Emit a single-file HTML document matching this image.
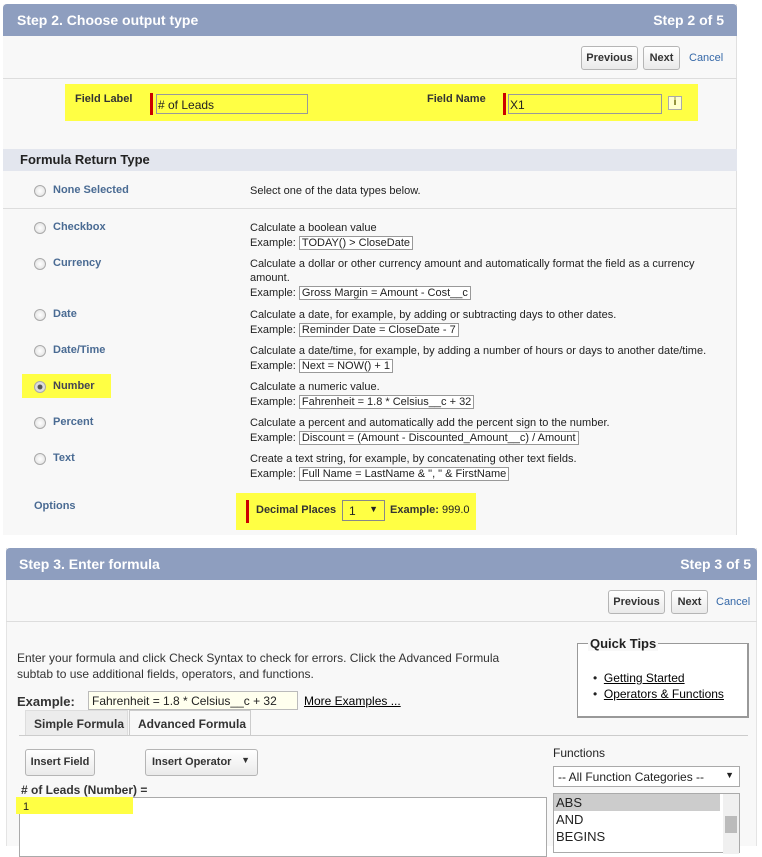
<!DOCTYPE html>
<html><head><style>
*{margin:0;padding:0;box-sizing:border-box}
body{width:762px;height:846px;background:#fff;position:relative;font-family:"Liberation Sans",Arial,sans-serif;font-size:11px;color:#222;overflow:hidden}
.a{position:absolute}
.hdr{background:#8e9ebf;color:#fff;font-weight:bold;font-size:14px}
.btn{position:absolute;border:1px solid #b5b5b5;border-radius:3px;background:linear-gradient(#fff,#eaeaea);font-weight:bold;color:#333;font-size:11px;text-align:center;line-height:22px}
.lbl{color:#4a6b93;font-weight:bold;font-size:11px}
.rad{position:absolute;width:12px;height:12px;border-radius:50%;border:1px solid #aaa;background:radial-gradient(#fff,#ddd)}
.ex{border:1px solid #999;padding:0 2px;background:#fff}
.d{position:absolute;left:250px;line-height:14px;font-size:11px}
a{color:#000;text-decoration:underline}
</style></head><body>
<!-- panel 1 -->
<div class="a" style="left:3px;top:4px;width:734px;height:531px;background:#f8f8f8;border-right:1px solid #e0e0e0"></div>
<div class="a hdr" style="left:3px;top:4px;width:734px;height:32px;border-radius:4px 4px 0 0"><span class="a" style="left:14px;top:8px">Step 2. Choose output type</span><span class="a" style="right:13px;top:8px">Step 2 of 5</span></div>
<div class="btn" style="left:581px;top:46px;width:57px;height:24px">Previous</div>
<div class="btn" style="left:643px;top:46px;width:37px;height:24px">Next</div>
<div class="a" style="left:689px;top:52px;color:#3568a8">Cancel</div>
<div class="a" style="left:3px;top:78px;width:734px;height:1px;background:#ddd"></div>
<div class="a" style="left:65px;top:84px;width:633px;height:37px;background:#ffff44"></div>
<div class="a" style="left:75px;top:93px;font-weight:bold;color:#333">Field Label</div>
<div class="a" style="left:150px;top:93px;width:3px;height:22px;background:#c00"></div>
<div class="a" style="left:156px;top:94px;width:152px;height:20px;border:1px solid #999;background:#ffff44;font-size:12px;padding:3px 1px">#&nbsp;of Leads</div>
<div class="a" style="left:427px;top:93px;font-weight:bold;color:#333">Field Name</div>
<div class="a" style="left:503px;top:93px;width:3px;height:22px;background:#c00"></div>
<div class="a" style="left:508px;top:94px;width:154px;height:20px;border:1px solid #999;background:#ffff44;font-size:12px;padding:3px 1px">X1</div>
<div class="a" style="left:668px;top:96px;width:14px;height:14px;border:1px solid #aaa;background:#ffc;font-size:10px;text-align:center;line-height:12px;color:#660;font-weight:bold">i</div>
<div class="a" style="left:3px;top:149px;width:734px;height:22px;background:#e3e6ee"></div>
<div class="a" style="left:20px;top:152px;font-size:13px;font-weight:bold;color:#222">Formula Return Type</div>
<div class="rad" style="left:34px;top:185px"></div><div class="a lbl" style="left:53px;top:184px">None Selected</div>
<div class="d" style="top:184px">Select one of the data types below.</div>
<div class="a" style="left:3px;top:208px;width:734px;height:1px;background:#ddd"></div>

<div class="rad" style="left:34px;top:222px"></div><div class="a lbl" style="left:53px;top:221px">Checkbox</div>
<div class="d" style="top:221px">Calculate a boolean value<br><span style="line-height:16px">Example: <span class="ex">TODAY() &gt; CloseDate</span></span></div>
<div class="rad" style="left:34px;top:258px"></div><div class="a lbl" style="left:53px;top:257px">Currency</div>
<div class="d" style="top:257px;width:460px">Calculate a dollar or other currency amount and automatically format the field as a currency amount.<br><span style="line-height:16px">Example: <span class="ex">Gross Margin = Amount - Cost__c</span></span></div>
<div class="rad" style="left:34px;top:309px"></div><div class="a lbl" style="left:53px;top:308px">Date</div>
<div class="d" style="top:308px">Calculate a date, for example, by adding or subtracting days to other dates.<br><span style="line-height:16px">Example: <span class="ex">Reminder Date = CloseDate - 7</span></span></div>
<div class="rad" style="left:34px;top:345px"></div><div class="a lbl" style="left:53px;top:344px">Date/Time</div>
<div class="d" style="top:344px">Calculate a date/time, for example, by adding a number of hours or days to another date/time.<br><span style="line-height:16px">Example: <span class="ex">Next = NOW() + 1</span></span></div>
<div class="a" style="left:22px;top:374px;width:89px;height:24px;background:#ffff44"></div>
<div class="rad" style="left:34px;top:381px;background:radial-gradient(#555 30%,#ddd 40%)"></div><div class="a lbl" style="left:53px;top:380px;color:#445">Number</div>
<div class="d" style="top:380px">Calculate a numeric value.<br><span style="line-height:16px">Example: <span class="ex">Fahrenheit = 1.8 * Celsius__c + 32</span></span></div>
<div class="rad" style="left:34px;top:417px"></div><div class="a lbl" style="left:53px;top:416px">Percent</div>
<div class="d" style="top:416px">Calculate a percent and automatically add the percent sign to the number.<br><span style="line-height:16px">Example: <span class="ex">Discount = (Amount - Discounted_Amount__c) / Amount</span></span></div>
<div class="rad" style="left:34px;top:453px"></div><div class="a lbl" style="left:53px;top:452px">Text</div>
<div class="d" style="top:452px">Create a text string, for example, by concatenating other text fields.<br><span style="line-height:16px">Example: <span class="ex">Full Name = LastName &amp; ", " &amp; FirstName</span></span></div>
<div class="a lbl" style="left:34px;top:500px">Options</div>
<div class="a" style="left:236px;top:493px;width:240px;height:37px;background:#ffff44"></div>
<div class="a" style="left:246px;top:500px;width:3px;height:23px;background:#c00"></div>
<div class="a" style="left:256px;top:504px;font-weight:bold;color:#333">Decimal Places</div>
<div class="a" style="left:342px;top:500px;width:43px;height:21px;border:1px solid #888;background:#ffff44;font-size:12px;padding:3px 6px">1<span style="position:absolute;right:6px;top:3px;font-size:9px">▼</span></div>
<div class="a" style="left:390px;top:504px"><b style="color:#333">Example:</b> 999.0</div>

<!-- panel 2 -->
<div class="a" style="left:6px;top:548px;width:751px;height:298px;background:#f8f8f8;border-left:1px solid #e4e4e4;border-right:1px solid #e4e4e4"></div>
<div class="a hdr" style="left:6px;top:548px;width:751px;height:32px;border-radius:4px 4px 0 0"><span class="a" style="left:13px;top:8px">Step 3. Enter formula</span><span class="a" style="right:6px;top:8px">Step 3 of 5</span></div>
<div class="btn" style="left:608px;top:590px;width:57px;height:24px">Previous</div>
<div class="btn" style="left:671px;top:590px;width:37px;height:24px">Next</div>
<div class="a" style="left:716px;top:596px;color:#3568a8">Cancel</div>
<div class="a" style="left:6px;top:621px;width:751px;height:1px;background:#ddd"></div>
<div class="a" style="left:17px;top:650px;width:518px;font-size:12px;line-height:16px;color:#333">Enter your formula and click Check Syntax to check for errors. Click the Advanced Formula subtab to use additional fields, operators, and functions.</div>
<div class="a" style="left:577px;top:643px;width:172px;height:75px;border:2px solid #999;border-width:1px 2px 2px 1px;background:#fff"></div>
<div class="a" style="left:588px;top:636px;font-size:13px;font-weight:bold;background:#f8f8f8;padding:0 2px">Quick Tips</div>
<div class="a" style="left:593px;top:670px;font-size:12px;line-height:16px">•&nbsp;&nbsp;<a>Getting Started</a><br>•&nbsp;&nbsp;<a>Operators &amp; Functions</a></div>
<div class="a" style="left:17px;top:694px;font-size:13px;font-weight:bold;color:#333">Example:</div>
<div class="a" style="left:88px;top:691px;width:210px;height:19px;border:1px solid #bbb;background:#ffffee;font-size:12px;padding:2px 3px;white-space:nowrap">Fahrenheit = 1.8 * Celsius__c + 32</div>
<div class="a" style="left:304px;top:694px;font-size:12px"><a>More Examples ...</a></div>
<div class="a" style="left:25px;top:710px;width:103px;height:25px;background:#ececec;border:1px solid #ddd;border-bottom:none;font-weight:bold;font-size:12px;padding:6px 0 0 8px;color:#333">Simple Formula</div>
<div class="a" style="left:129px;top:710px;width:122px;height:26px;background:#f8f8f8;border:1px solid #ccc;border-bottom:none;font-weight:bold;font-size:12px;padding:6px 0 0 8px;color:#333">Advanced Formula</div>
<div class="a" style="left:19px;top:735px;width:729px;height:1px;background:#ccc"></div>
<div class="btn" style="left:25px;top:749px;width:70px;height:27px;line-height:25px">Insert Field</div>
<div class="btn" style="left:145px;top:749px;width:113px;height:27px;line-height:25px;text-align:left;padding-left:6px">Insert Operator <span style="position:absolute;right:7px;top:-2px;font-size:9px">▼</span></div>
<div class="a" style="left:553px;top:746px;font-size:12px">Functions</div>
<div class="a" style="left:553px;top:766px;width:187px;height:21px;border:1px solid #aaa;background:#fff;font-size:12px;padding:3px 4px">-- All Function Categories --<span style="position:absolute;right:5px;top:3px;font-size:9px">▼</span></div>
<div class="a" style="left:21px;top:783px;font-size:12px;font-weight:bold;color:#333">#&nbsp;of Leads (Number) =</div>
<div class="a" style="left:19px;top:797px;width:528px;height:60px;border:1px solid #aaa;background:#fff"></div>
<div class="a" style="left:16px;top:797px;width:117px;height:17px;background:#ffff44;font-size:11px;padding:4px 0 0 7px">1</div>
<div class="a" style="left:553px;top:793px;width:187px;height:60px;border:1px solid #aaa;background:#fff;font-size:13px;line-height:17px"><div style="background:#ccc;width:166px;padding-left:2px">ABS</div><div style="padding-left:2px">AND</div><div style="padding-left:2px">BEGINS</div>
<div class="a" style="right:0;top:0;width:16px;height:60px;background:#f0f0f0"><div style="margin:22px 2px 0;height:17px;background:#bbb"></div></div></div>
</body></html>
